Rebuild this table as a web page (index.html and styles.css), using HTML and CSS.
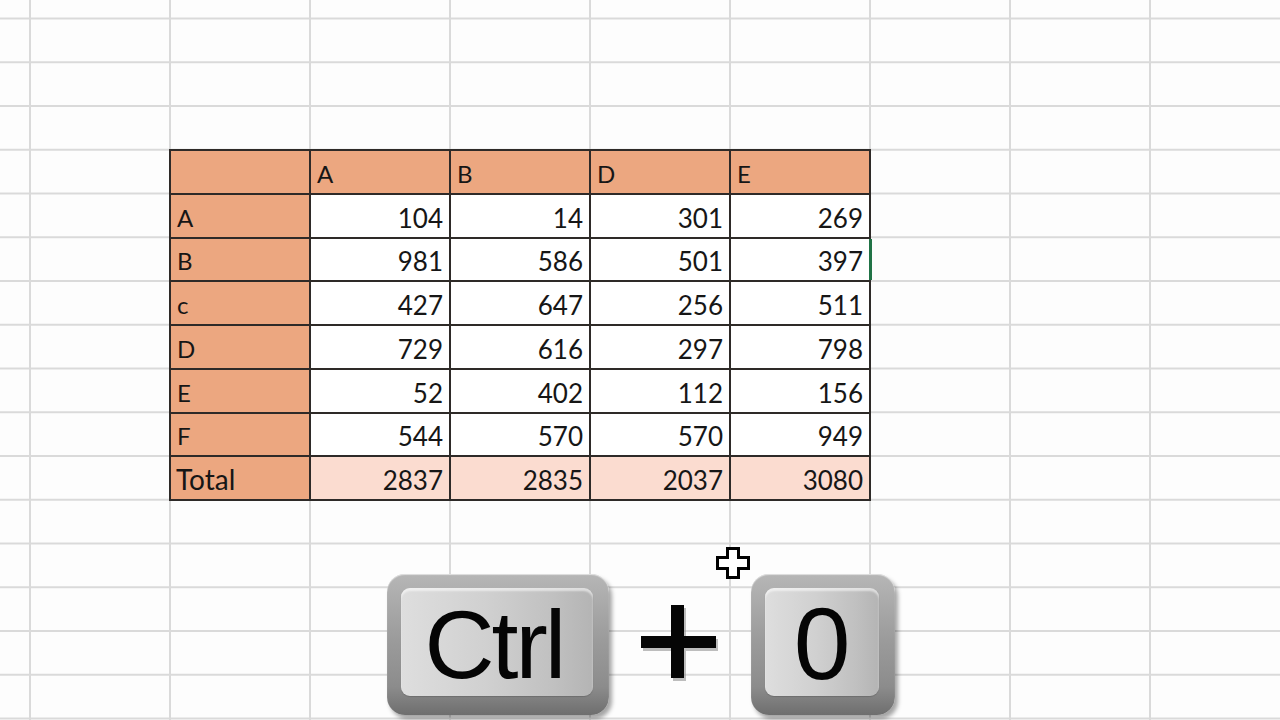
FILE: index.html
```html
<!DOCTYPE html>
<html lang="en">
<head>
<meta charset="utf-8">
<title>Ctrl + 0</title>
<link rel="stylesheet" href="styles.css">
</head>
<body>
<main class="sheet">
  <div class="table">
    <div class="cell head"></div>
    <div class="cell head letter">A</div>
    <div class="cell head letter">B</div>
    <div class="cell head letter">D</div>
    <div class="cell head letter">E</div>

    <div class="cell head letter">A</div>
    <div class="cell num">104</div>
    <div class="cell num">14</div>
    <div class="cell num">301</div>
    <div class="cell num">269</div>

    <div class="cell head letter">B</div>
    <div class="cell num">981</div>
    <div class="cell num">586</div>
    <div class="cell num">501</div>
    <div class="cell num selected">397</div>

    <div class="cell head letter">c</div>
    <div class="cell num">427</div>
    <div class="cell num">647</div>
    <div class="cell num">256</div>
    <div class="cell num">511</div>

    <div class="cell head letter">D</div>
    <div class="cell num">729</div>
    <div class="cell num">616</div>
    <div class="cell num">297</div>
    <div class="cell num">798</div>

    <div class="cell head letter">E</div>
    <div class="cell num">52</div>
    <div class="cell num">402</div>
    <div class="cell num">112</div>
    <div class="cell num">156</div>

    <div class="cell head letter">F</div>
    <div class="cell num">544</div>
    <div class="cell num">570</div>
    <div class="cell num">570</div>
    <div class="cell num">949</div>

    <div class="cell head total-label">Total</div>
    <div class="cell num total">2837</div>
    <div class="cell num total">2835</div>
    <div class="cell num total">2037</div>
    <div class="cell num total">3080</div>
  </div>

  <div class="keys">
    <div class="key key-wide"><div class="face"><span class="cap">Ctrl</span></div></div>
    <svg class="plus" width="80" height="80" viewBox="0 0 80 80" aria-hidden="true">
      <g fill="#8a8a8a" opacity="0.55" transform="translate(2 3)">
        <rect x="31" y="2" width="13" height="73"/>
        <rect x="1" y="33" width="75" height="12"/>
      </g>
      <g fill="#050505">
        <rect x="31" y="2" width="13" height="73"/>
        <rect x="1" y="33" width="75" height="12"/>
      </g>
    </svg>
    <div class="key key-square"><div class="face"><span class="cap">0</span></div></div>
  </div>

  <svg class="cursor" width="36" height="34" viewBox="0 0 36 34" aria-hidden="true">
    <path d="M12.5 2.5 H23.5 V11.5 H33.5 V22.5 H23.5 V31.5 H12.5 V22.5 H2.5 V11.5 H12.5 Z" fill="#ffffff" stroke="#000" stroke-width="3" stroke-linejoin="miter"/>
  </svg>
</main>
</body>
</html>
```
FILE: styles.css
```css
html, body {
  margin: 0;
  padding: 0;
}

body {
  width: 1280px;
  height: 720px;
  overflow: hidden;
  background-color: #fdfdfd;
  background-image:
    linear-gradient(to right, #dadada 0, #dadada 2px, transparent 2px),
    linear-gradient(to bottom, #dadada 0, #dadada 2px, transparent 2px);
  background-size: 140px 100%, 100% 43.75px;
  background-position: 29px 0, 0 17.5px;
  font-family: Lato, "Open Sans", "Liberation Sans", sans-serif;
  color: #161616;
}

.sheet {
  position: relative;
  padding: 149px 0 0 169px;
}

.table {
  display: grid;
  grid-template-columns: repeat(5, 138px);
  grid-auto-rows: 41.75px;
  gap: 2px;
  padding: 2px;
  width: max-content;
  background: #2e2a28;
}

.cell {
  display: flex;
  align-items: flex-end;
  padding: 0 6px 6px 6px;
  background: #ffffff;
  font-size: 26px;
  line-height: 1;
}

.head {
  background: #eca780;
}

.letter {
  font-size: 24px;
  padding-bottom: 7px;
}

.total-label {
  font-size: 28px;
  padding-left: 5px;
}

.num {
  justify-content: flex-end;
}

.total {
  background: #fbdcd0;
}

.selected {
  box-shadow: 3px 0 0 #217346;
}

.keys {
  display: flex;
  align-items: center;
  margin: 73px 0 0 218px;
}

.key {
  box-sizing: border-box;
  height: 141px;
  border-radius: 18px;
  padding: 14px 16px 19px 14px;
  background: linear-gradient(to bottom, #b6b6b6 0%, #9c9c9c 45%, #8c8c8c 80%, #6e6e6e 100%);
  box-shadow: 3px 4px 4px rgba(0, 0, 0, 0.35), inset 0 1px 1px rgba(255, 255, 255, 0.6);
  display: flex;
}

.key-wide {
  width: 222px;
}

.key-square {
  width: 144px;
  margin-left: 31px;
}

.face {
  flex: 1;
  display: flex;
  align-items: center;
  justify-content: center;
  border-radius: 9px;
  background: linear-gradient(to right, #dedede 0%, #d0d0d0 45%, #c0c0c0 80%, #b4b4b4 100%);
  box-shadow: inset 0 3px 2px rgba(255, 255, 255, 0.55), 0 1px 1px rgba(0, 0, 0, 0.15);
}

.cap {
  font-family: "Liberation Sans", Arial, sans-serif;
  color: #050505;
  line-height: 1;
}

.key-wide .cap {
  font-size: 97px;
  letter-spacing: -3px;
  margin-right: 6px;
  margin-top: 4px;
}

.key-square .cap {
  font-size: 102px;
  margin-top: 4px;
}

.plus {
  display: block;
  margin-left: 31px;
  margin-top: -4px;
}

.cursor {
  position: absolute;
  left: 715px;
  top: 546px;
}
```
